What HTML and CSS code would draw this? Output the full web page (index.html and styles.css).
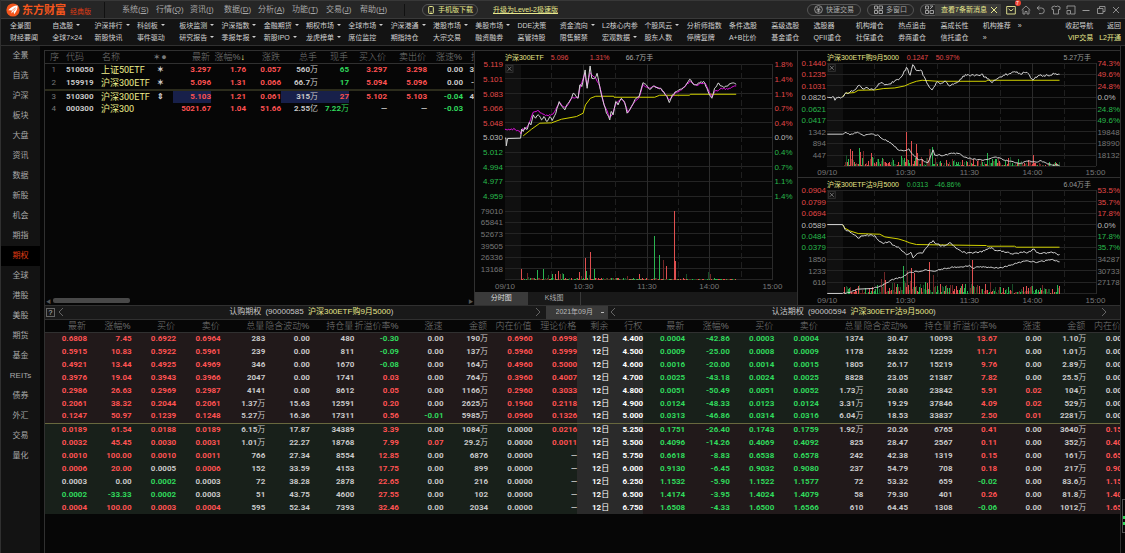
FILE: index.html
```html
<!DOCTYPE html>
<html lang="zh-CN">
<head>
<meta charset="utf-8">
<title>东方财富 经典版</title>
<link rel="stylesheet" href="styles.css">
</head>
<body>
<header class="topbar">
  <div class="brand">
    <svg class="brand-mark" viewBox="0 0 14 14"><circle cx="7" cy="7" r="6.6" fill="#f4551c"/><path d="M2.3 7.2Q6 2.6 11.6 2.5Q11.8 7 8.2 11.2L7.4 8.4L5.3 10.6L5.9 7.4Z" fill="#fff"/><path d="M5.9 7.6L9.4 4.6M7.3 8.7L9.9 5.4" stroke="#f4551c" stroke-width=".6"/></svg>
    <strong class="brand-name">东方财富</strong><span class="brand-edition">经典版</span>
  </div>
  <nav class="menu" id="menu"></nav>
  <button class="pill phone" type="button"><svg class="ico-s" viewBox="0 0 8 8"><rect x="1.7" y=".5" width="4.6" height="7" rx=".7" fill="none" stroke="currentColor"/><path d="M3.3 6h1.4" stroke="currentColor"/></svg>手机版下载</button>
  <a class="upgrade" href="#">升级为Level-2极速版</a>
  <div class="tools">
    <button class="pill" type="button"><svg class="ico-m" viewBox="0 0 9 9"><circle cx="4.5" cy="4.5" r="3.9" fill="none" stroke="currentColor" stroke-width=".8"/><path d="M2.7 2L4.5 4.2L6.3 2M2.6 4.5h3.8M2.6 6h3.8M4.5 4.2V7.5" fill="none" stroke="currentColor" stroke-width=".8"/></svg>快速交易</button>
    <button class="pill" type="button"><svg class="ico-m" viewBox="0 0 9 9"><path d="M.5 1h3v3h-3zM5 1h3.5v3H5zM.5 5.5h3v3h-3zM5 5.5h3.5v3H5z" fill="none" stroke="currentColor" stroke-width=".9"/></svg>多窗口</button>
    <div class="notice-wrap">
      <button class="pill stub" type="button" aria-label="布局"><svg class="ico-m" viewBox="0 0 9 9"><path d="M.5 1h3v3h-3zM5 4l3-3M.5 5.5h3v3h-3zM5 8.5V5.5h3.5v3zM5 1h3" fill="none" stroke="currentColor" stroke-width=".9"/></svg></button>
      <div class="notice"><a href="#">查看7条新消息</a><button type="button" aria-label="关闭消息"><svg class="ico-s" viewBox="0 0 8 8"><path d="M1 1l6 6M7 1l-6 6" stroke="currentColor" fill="none"/></svg></button></div>
    </div>
    <div class="sysicons">
      <button class="mail" type="button" aria-label="邮件"><svg class="ico" viewBox="0 0 10 10"><path d="M.7 1.500h8.600v7.500H.7zM2.500 3.800L5 6L7.500 3.800" fill="none" stroke="currentColor"/></svg><span class="badge">7</span></button>
      <button type="button" aria-label="首页"><svg class="ico" viewBox="0 0 10 10"><path d="M.7 5L5 1l4.300 4M2 4.500V9h2V6.500h2V9h2V4.500" fill="none" stroke="currentColor" stroke-width=".9"/></svg></button>
      <button type="button" aria-label="返回"><svg class="ico" viewBox="0 0 10 10"><path d="M3.500 1L1 3l2.500 2M1 3h4.500a2.800 2.800 0 010 5.600H3" fill="none" stroke="currentColor" stroke-width=".9"/></svg></button>
      <button type="button" aria-label="皮肤"><svg class="ico" viewBox="0 0 10 10"><path d="M1 2l2.500-1Q5 2.500 6.500 1L9 2v2.500H7.500V9h-5V4.500H1z" fill="none" stroke="currentColor" stroke-width=".9"/></svg></button>
      <button type="button" aria-label="小窗"><svg class="ico" viewBox="0 0 10 10"><path d="M1 4V1h8v8H5M1 5.500h3.500V9H1z" fill="none" stroke="currentColor" stroke-width=".9"/></svg></button>
      <button type="button" aria-label="最小化"><svg class="ico" viewBox="0 0 10 10"><path d="M1.500 5.500h7" stroke="currentColor"/></svg></button>
      <button type="button" aria-label="还原"><svg class="ico" viewBox="0 0 10 10"><path d="M1.500 3.500h5.500v5H1.500zM3.500 3.500v-2H9v5H7" fill="none" stroke="currentColor" stroke-width=".9"/></svg></button>
      <button type="button" aria-label="关闭"><svg class="ico" viewBox="0 0 10 10"><path d="M2 2l6 6M8 2l-6 6" stroke="currentColor" stroke-width=".9"/></svg></button>
    </div>
  </div>
</header>

<nav class="quicknav">
  <div class="quick-grid" id="quick"></div>
  <div class="quick-side">
    <a href="#">收起导航</a><a href="#">返回</a>
    <a class="gold" href="#">VIP交易</a><a class="gold" href="#">L2开通</a>
  </div>
</nav>

<div class="workspace">
  <nav class="sidebar" id="sidebar"></nav>
  <main class="main">
    <div class="upper">
      <section class="watch">
        <table class="quotes">
          <colgroup><col class="w-no"><col class="w-code"><col class="w-name"><col class="w-mark"><col class="w-38"><col class="w-35"><col class="w-35"><col class="w-37"><col class="w-31"><col class="w-38"><col class="w-40"><col class="w-36"><col></colgroup>
          <thead><tr><th>序</th><th class="l">代码</th><th class="l">名称</th><th class="mark">✶●</th><th>最新</th><th>涨幅%<span class="down">↓</span></th><th>涨跌</th><th>总手</th><th>现手</th><th>买入价</th><th>卖出价</th><th>涨速%</th><th class="cut">持</th></tr></thead>
          <tbody id="watch"></tbody>
        </table>
        <div class="scroll"><span class="arrow">◀</span><span class="thumb"></span><span class="arrow end">▶</span></div>
      </section>
      <section class="chart-main">
        <svg id="chart1" class="chart" viewBox="475 51 322 241"></svg>
        <div class="tabs"><button class="tab on" type="button">分时图</button><button class="tab" type="button">K线图</button></div>
      </section>
      <section class="chart-side">
        <svg id="chart2" class="chart" viewBox="798 51 323 126"></svg>
        <svg id="chart3" class="chart" viewBox="798 178 323 127"></svg>
      </section>
    </div>
    <section class="options">
      <div class="option-bar">
        <div class="bar-half"><button class="help" type="button">?</button><button class="step" type="button" aria-label="上一个"><svg class="ico-s" viewBox="0 0 8 8"><path d="M6 0L2 4l4 4" fill="none" stroke="currentColor" stroke-width=".8"/></svg></button><p class="bar-title call">认购期权 <span>(90000585</span> <b>沪深300ETF购9月5000</b>)</p><button class="step" type="button" aria-label="下一个"><svg class="ico-s" viewBox="0 0 8 8"><path d="M2 0l4 4l-4 4" fill="none" stroke="currentColor" stroke-width=".8"/></svg></button></div>
        <select class="month" aria-label="到期月份"><option>2021年09月</option></select>
        <div class="bar-half put-half"><button class="step" type="button" aria-label="上一个"><svg class="ico-s" viewBox="0 0 8 8"><path d="M6 0L2 4l4 4" fill="none" stroke="currentColor" stroke-width=".8"/></svg></button><p class="bar-title put">认沽期权 <span>(90000594</span> <b>沪深300ETF沽9月5000</b>)</p><button class="step" type="button" aria-label="下一个"><svg class="ico-s" viewBox="0 0 8 8"><path d="M2 0l4 4l-4 4" fill="none" stroke="currentColor" stroke-width=".8"/></svg></button></div>
      </div>
      <div class="option-scroll">
        <table class="optable">
          <colgroup id="opcols"></colgroup>
          <thead><tr id="ophead"></tr></thead>
          <tbody id="opbody"></tbody>
        </table>
      </div>
    </section>
  </main>
  <aside class="edge"><div class="meter"></div></aside>
</div>
<script src="app.js"></script>
</body>
</html>
```
FILE: styles.css
```css
* { box-sizing: border-box; }
body {
  margin: 0; height: 100vh; overflow: hidden;
  display: flex; flex-direction: column;
  background: #060606; color: #c8c8c8;
  border-left: 1px solid #303030;
  font: 8px/12px "Liberation Sans", "Noto Sans CJK SC", sans-serif;
}
a { color: inherit; text-decoration: none; }
button { font: inherit; color: inherit; background: none; border: 0; padding: 0; margin: 0; white-space: nowrap; }
svg { display: block; }
.ico-s { width: 8px; height: 8px; }
.ico-m { width: 9px; height: 9px; }
.ico { width: 10px; height: 10px; }

.topbar {
  flex: none; height: 19px; display: flex; align-items: center;
  background: #262626; border-top: 1px solid #383838; border-bottom: 1px solid #3a3a3a;
  white-space: nowrap;
}
.brand { width: 104px; padding-left: 5px; display: flex; align-items: center; gap: 2px; color: #f4551c; border-right: 1px solid #111; }
.brand-mark { width: 14px; height: 14px; }
.brand-name { font-size: 11px; line-height: 16px; }
.brand-edition { font-size: 7px; line-height: 8px; padding: 4px 0 0 2px; color: #e03c14; }
.menu { display: grid; grid-template-columns: repeat(8, 34px); padding: 0 10px 0 17px; color: #a8a8a8; border-right: 1px solid #111; }
.pill { display: flex; align-items: center; justify-content: center; gap: 3px; height: 12px; padding: 0 6px; border: 1px solid #555; border-radius: 6px; font-size: 7px; color: #aaa; }
.phone { margin: 0 15px 0 17px; padding: 0 4px; color: #e6e68c; }
.upgrade { font-size: 7px; color: #e6e68c; text-decoration: underline; }
.tools { margin-left: auto; display: flex; align-items: center; gap: 6px; padding-right: 2px; }
.notice-wrap { display: flex; align-items: center; margin-right: -4px; }
.stub { border-right: 0; border-radius: 6px 0 0 6px; padding: 0 1px 0 4px; }
.notice { display: flex; align-items: center; gap: 3px; height: 12px; padding: 0 3px 0 6px; background: #3c3c3a; color: #e6e68c; font-size: 7px; }
.sysicons { display: grid; grid-template-columns: repeat(8, 15px); justify-items: center; color: #999; }
.mail { position: relative; color: #d8d88c; }
.badge { position: absolute; left: 9px; top: -5px; width: 6px; height: 6px; border-radius: 3px; background: #f04030; color: #fff; font-size: 5px; line-height: 6px; text-align: center; }

.quicknav { flex: none; height: 27px; display: flex; justify-content: space-between; padding: 1px 4px 0 9px; background: #131313; border-bottom: 1px solid #303030; font-size: 7px; color: #d0d0d0; white-space: nowrap; }
.quick-grid { flex: 0 1 1015px; display: grid; grid-template-columns: repeat(24, minmax(0, 1fr)); grid-auto-rows: 12px; }
.has-menu::after { content: ""; display: inline-block; margin: 0 0 2px 3px; border: 2px solid transparent; border-top-color: #d0d0d0; border-bottom: 0; }
.quick-side { display: grid; grid-template-columns: auto auto; grid-auto-rows: 12px; column-gap: 6px; justify-items: end; }
.gold { color: #e6e68c; }

.workspace { flex: 1; min-height: 0; display: flex; }
.sidebar { flex: none; width: 39px; background: #131313; display: flex; flex-direction: column; color: #a8a8a8; }
.sidebar a { height: 20px; line-height: 20px; text-align: center; }
.sidebar .on { background: #000; color: #e03c14; }
.main { flex: 1; min-width: 0; margin: 4px 0 0 4px; border-left: 1px solid #303030; border-top: 1px solid #303030; display: flex; flex-direction: column; }
.edge { flex: none; width: 5px; border-left: 1px solid #303030; display: flex; flex-direction: column; justify-content: flex-end; padding-bottom: 20px; }
.meter { height: 34px; margin-left: 1px; border: 1px solid #505050; border-right: 0; background: linear-gradient(transparent 16px, #2fd95a 16px, #2fd95a 19px, transparent 19px, transparent 22px, #2fd95a 22px, #2fd95a 25px, transparent 25px); }

.upper { flex: none; display: grid; grid-template-columns: 430fr 323fr 324fr; }
.upper > section + section { border-left: 1px solid #303030; }
.watch { display: flex; flex-direction: column; overflow: hidden; }
table { border-collapse: collapse; table-layout: fixed; }
th { font: 300 9px/12px "Liberation Sans", "Noto Sans CJK SC", sans-serif; color: #787878; text-align: right; padding: 0 1px 0 0; white-space: nowrap; }
td { height: 13px; font: 700 8px/12px Roboto, "Noto Sans CJK SC", sans-serif; padding: 0; text-align: right; white-space: nowrap; }
thead tr { border-bottom: 1px solid #303030; }
.man { font-weight: 400; }
.quotes { width: 100%; }
.quotes th { overflow: hidden; }
.w-no { width: 15px; }
.w-code { width: 36px; }
.w-name { width: 52px; }
.w-mark { width: 25px; }
.w-31 { width: 31px; }
.w-35 { width: 35px; }
.w-36 { width: 36px; }
.w-37 { width: 37px; }
.w-38 { width: 38px; }
.w-40 { width: 40px; }
.quotes .l { text-align: left; padding-left: 6px; }
.quotes .name { font-size: 9px; font-weight: 400; color: #f0f08c; padding-left: 5px; }
.quotes .no { font-weight: 400; color: #777; padding-right: 4px; }
.quotes .mark { text-align: center; }
.quotes th.cut { padding-left: 8px; text-align: left; }
.quotes .sel { background: #18204a; }
.quotes .ruled { border-top: 2px solid #2c2c1c; }
.down { color: #f0f08c; font-weight: 700; }
.up-c { color: #ff5252; }
.dn-c { color: #30d95c; }
.scroll { margin-top: auto; display: flex; align-items: center; gap: 2px; height: 6px; margin-bottom: 1px; padding: 0 1px; color: #555; font-size: 5px; line-height: 6px; }
.thumb { width: 18%; height: 5px; background: #484848; border-radius: 2px; }
.end { margin-left: auto; }

.chart { width: 100%; height: auto; font-size: 8px; }
.chart-main { display: flex; flex-direction: column; }
.chart-side #chart3 { border-top: 1px solid #303030; }
.tabs { display: flex; height: 13px; margin-top: auto; background: #191919; color: #aaa; }
.tab { width: 53px; border-right: 1px solid #3a3a3a; font-size: 7px; }
.tab.on { background: #3a3a3a; color: #ddd; }

.options { flex: 1; min-height: 0; display: flex; flex-direction: column; border-top: 1px solid #303030; }
.option-bar { flex: none; height: 14px; display: grid; grid-template-columns: 501fr 63fr 512fr; align-items: center; background: #191919; border-bottom: 1px solid #303030; }
.bar-half { display: flex; align-items: center; gap: 2px; padding: 0 4px 0 1px; }
.put-half { padding-right: 12px; }
.bar-title { margin: 0 auto; white-space: pre; }
.call { padding-left: 24px; }
.put { padding-right: 10px; }
.bar-title span { padding: 0 2px; }
.bar-title b { font-weight: 400; color: #e6e68c; }
.help { width: 9px; height: 9px; border: 1px solid #666; font-size: 7px; line-height: 7px; }
.step { color: #777; }
.month { appearance: none; width: 100%; height: 13px; border: 0; border-radius: 0; padding: 0 0 0 10px; font: inherit; font-size: 7px; color: #bbb; background: #3a3a3a linear-gradient(#bbb, #bbb) calc(100% - 4px) 6px / 3px 1px no-repeat; }
.option-scroll { flex: 1; min-height: 0; overflow: hidden; }
.optable { width: calc(100% + 11px); }
.c-edge { width: 42px; }
.c-days { width: 32px; }
.c-strike { width: 34px; }
.red { background: #21191a; }
.green { background: #18201a; }
.mid { background: #2a2a2a; color: #fff; }
.atm { border-top: 1px solid #68683e; }
```
FILE: app.js
```js
const byId = id => document.getElementById(id);

/* "+" marks a rising value, "~" a falling one */
function cell(value, cls = '') {
  const tone = value[0] === '+' ? ' up-c' : value[0] === '~' ? ' dn-c' : '';
  const text = value.replace(/^[+~]/, '').replace(/[万亿日]/, '<span class="man">$&</span>');
  return `<td class="${cls}${tone}">${text}</td>`;
}

byId('menu').innerHTML = '系统(S) 行情(Q) 资讯(I) 数据(D) 分析(A) 功能(T) 交易(J) 帮助(H)'.split(' ')
  .map(t => `<a href="#">${t.replace(/\((.)\)/, '(<u>$1</u>)')}</a>`).join('');

const quick = ('全景图 自选股* 沪深排行* 科创板* 板块监测* 沪深指数* 金融期货* 期权市场* 全球市场* 沪深港通* 港股市场* 美股市场* DDE决策 资金流向* L2核心内参 个股风云* 分析师指数 条件选股 高级选股 选股器 机构增仓 热点追击 高成长性 机构推荐&emsp;» ' +
  '财经要闻 全球7×24 新股快讯 事件驱动 研究报告* 季报年报* 新股IPO* 龙虎榜单* 席位监控 期指持仓 大宗交易 融资融券 高管持股 限售解禁 宏观数据* 股东人数 停牌复牌 A+B比价 基金重仓 QFII重仓 社保重仓 券商重仓 信托重仓 »').split(' ');
byId('quick').innerHTML = quick.map(t => `<a href="#"${t.endsWith('*') ? ' class="has-menu"' : ''}>${t.replace('*', '')}</a>`).join('');

byId('sidebar').innerHTML = '全景 自选 沪深 板块 大盘 资讯 数据 新股 机会 期指 期权 全球 港股 美股 期货 基金 REITs 债券 外汇 交易 量化'.split(' ')
  .map(t => `<a href="#"${t === '期权' ? ' class="on"' : ''}>${t}</a>`).join('');

const watch = [
  '1 510050 上证50ETF ✶ +3.297 +1.76 +0.057 560万 ~65 +3.297 +3.298 0.00 3',
  '2 159919 沪深300ETF ✶ +5.096 +1.31 +0.066 66.7万 ~17 +5.094 +5.096 0.00 -',
  '3 510300 沪深300ETF ⇕ +5.103 +1.21 +0.061 315万 +27 +5.102 +5.103 ~-0.04 4',
  '4 000300 沪深300 _ +5021.67 +1.04 +51.66 2.55亿 ~7.22万 — — ~-0.03 _'
];
byId('watch').innerHTML = watch.map((line, r) => `<tr${r === 2 ? ' class="ruled"' : ''}>` + line.split(' ').map((v, i) => {
  const cls = { 0: 'no', 1: 'l', 2: 'l name', 3: 'mark' }[i] || (r === 2 && [4, 7, 8].includes(i) ? 'sel' : '');
  return cell(v === '_' ? '' : v, cls);
}).join('') + '</tr>').join('');

const side = ['最新', '涨幅%', '买价', '卖价', '总量', '隐含波动%', '持仓量', '折溢价率%', '涨速', '金额', '内在价值'];
const heads = [...side, '理论价格', '剩余', '行权', ...side];
byId('opcols').innerHTML = heads.map((h, i) => `<col${i === 0 || i === 14 ? ' class="c-edge"' : i === 12 ? ' class="c-days"' : i === 13 ? ' class="c-strike"' : ''}>`).join('');
byId('ophead').innerHTML = heads.map(h => `<th>${h}</th>`).join('');

const options = [
  '+0.6808 +7.45 +0.6922 +0.6964 283 0.00 480 ~-0.30 0.00 190万 +0.6960 +0.6998 12日 4.400 ~0.0004 ~-42.86 ~0.0003 ~0.0004 1374 30.47 10093 +13.67 0.00 1.10万 0.0000',
  '+0.5915 +10.83 +0.5922 +0.5961 239 0.00 811 ~-0.09 0.00 137万 +0.5960 +0.5999 12日 4.500 ~0.0009 ~-25.00 ~0.0008 ~0.0009 1178 28.52 12259 +11.71 0.00 1.01万 0.0000',
  '+0.4921 +13.44 +0.4925 +0.4969 346 0.00 1670 ~-0.08 0.00 164万 +0.4960 +0.5000 12日 4.600 ~0.0016 ~-20.00 ~0.0014 ~0.0015 1805 26.17 15219 +9.76 0.00 2.89万 0.0000',
  '+0.3976 +19.04 +0.3943 +0.3966 2047 0.00 1741 +0.03 0.00 764万 +0.3960 +0.4007 12日 4.700 ~0.0025 ~-43.18 ~0.0024 ~0.0025 8828 23.05 21387 +7.82 0.00 25.5万 0.0000',
  '+0.2986 +26.63 +0.2969 +0.2987 4141 0.00 8612 +0.05 0.00 1166万 +0.2960 +0.3033 12日 4.800 ~0.0051 ~-50.49 ~0.0051 ~0.0052 1.73万 20.80 23842 +5.91 +0.02 104万 0.0000',
  '+0.2061 +38.32 +0.2044 +0.2061 1.37万 15.63 12591 +0.20 0.00 2625万 +0.1960 +0.2118 12日 4.900 ~0.0124 ~-48.33 ~0.0123 ~0.0124 3.31万 19.29 37846 +4.09 +0.02 529万 0.0000',
  '+0.1247 +50.97 +0.1239 +0.1248 5.27万 16.36 17311 +0.56 ~-0.01 5985万 +0.0960 +0.1326 12日 5.000 ~0.0313 ~-46.86 ~0.0314 ~0.0316 6.04万 18.53 33837 +2.50 +0.01 2281万 0.0000',
  '+0.0189 +61.54 +0.0188 +0.0189 6.15万 17.87 34389 +3.39 0.00 1084万 0.0000 +0.0216 12日 5.250 ~0.1751 ~-26.40 ~0.1743 ~0.1759 1.92万 20.26 6765 +0.41 0.00 3640万 +0.1540',
  '+0.0032 +45.45 +0.0030 +0.0031 1.01万 22.27 18768 +7.99 +0.07 29.2万 0.0000 +0.0011 12日 5.500 ~0.4096 ~-14.26 ~0.4069 ~0.4092 825 28.47 2567 +0.11 0.00 352万 +0.4040',
  '+0.0010 +100.00 +0.0010 +0.0011 766 27.34 8554 +12.85 0.00 6876 0.0000 — 12日 5.750 ~0.6618 ~-8.83 ~0.6538 ~0.6578 242 42.38 1319 +0.15 0.00 161万 +0.6540',
  '+0.0006 +20.00 0.0005 +0.0006 152 33.59 4153 +17.75 0.00 899 0.0000 — 12日 6.000 ~0.9130 ~-6.45 ~0.9032 ~0.9080 237 54.79 708 +0.18 0.00 217万 +0.9040',
  '0.0003 0.00 ~0.0002 0.0003 72 38.28 2878 +22.65 0.00 216 0.0000 — 12日 6.250 ~1.1532 ~-5.90 ~1.1522 ~1.1577 72 53.32 659 ~-0.02 0.00 83.6万 +1.1540',
  '~0.0002 ~-33.33 ~0.0002 0.0003 51 43.75 4600 +27.55 0.00 102 0.0000 — 12日 6.500 ~1.4174 ~-3.95 ~1.4024 ~1.4079 58 79.30 401 +0.26 0.00 81.8万 +1.4040',
  '+0.0004 +100.00 +0.0003 +0.0004 595 52.34 7393 +32.46 0.00 2034 0.0000 — 12日 6.750 ~1.6508 ~-4.33 ~1.6500 ~1.6566 610 64.45 1308 ~-0.06 0.00 1012万 +1.6540'
];
byId('opbody').innerHTML = options.map((line, r) => `<tr${r === 7 ? ' class="atm"' : ''}>` + line.split(' ').map((v, i) => {
  const inCall = i < 12, upper = r < 7;
  const cls = i === 12 || i === 13 ? 'mid' : inCall === upper ? 'red' : 'green';
  return cell(v, cls);
}).join('') + '</tr>').join('');

/* Charts: series are written in units of a third of a pixel */
let seed = 7;
const rnd = () => (seed = (seed * 16807) % 2147483647) / 2147483647;
function path(points, noise, color) {
  const p = points.trim().split(/\s+/).map(s => s.split(',').map(Number));
  let d = `M${p[0]}`;
  for (let i = 1; i < p.length; i++) {
    const [x0, y0] = p[i - 1], [x1, y1] = p[i];
    const flat = Math.abs(y1 - y0) < 3 && x1 - x0 > 35;
    const n = noise && !flat ? Math.max(1, Math.round((x1 - x0) / 4)) : 1;
    for (let k = 1; k < n; k++) d += `L${x0 + (x1 - x0) * k / n},${y0 + (y1 - y0) * k / n + (rnd() - .5) * noise}`;
    d += `L${x1},${y1}`;
  }
  return `<path d="${d}" fill="none" stroke="${color}" stroke-width="3"/>`;
}
function text(x, y, s, fill, anchor = 'start', size = 8) {
  return `<text x="${x}" y="${y}" fill="${fill}" text-anchor="${anchor}" font-size="${size}">${s}</text>`;
}
function chart(id, c) {
  const [ox, oy] = c.origin, X = x => ox + x / 3, Y = y => oy + y / 3;
  const top = c.rows[0], base = c.rows[c.rows.length - 1];
  let g = `<rect x="${c.x0}" y="${top}" width="47" height="${base - top}" fill="#101010"/>`;
  c.rows.forEach(y => g += `<path d="M${c.x0},${y}H${c.x1}" stroke="#242424" stroke-width="3"/>`);
  c.solid.forEach(x => g += `<path d="M${x},${top}V${base}" stroke="#2b2b2b" stroke-width="3"/>`);
  c.dash.forEach(x => g += `<path d="M${x},${top}V${base}" stroke="#1f1f1f" stroke-width="3" stroke-dasharray="18 9"/>`);
  c.bars.forEach(([x, y, col]) => g += `<path d="M${x},${base}V${y}" stroke="${col}" stroke-width="3"/>`);
  let t = '';
  c.left.forEach((s, i) => t += text(c.tx - 2, Y(c.rows[i]) + 3, s, tone(c, i), 'end'));
  c.right.forEach((s, i) => t += text(c.rx, Y(c.rows[i]) + 3, s, tone(c, i)));
  ['09/10', '10:30', '11:30', '14:00', '15:00'].forEach((s, i) => t += text(X(c.times[i]), Y(base) + 9, s, '#777', 'middle'));
  c.title.forEach(([x, s, f]) => t += text(x, c.ty, s, f, 'start', 7));
  const bx = X(c.x0) + 1, by = Y(top) + 1;
  t += `<rect x="${bx}" y="${by}" width="7" height="7" fill="#101010" stroke="#333" stroke-width="1"/><path d="M${bx + 1.5},${by + 1.5}l4,4m0,-4l-4,4" stroke="#999" stroke-width=".7"/>`;
  byId(id).innerHTML = `<g transform="translate(${ox} ${oy}) scale(.333333)"><g shape-rendering="crispEdges">${g}</g>${c.lines.map(l => path(...l)).join('')}</g>${t}`;
}
const tone = (c, i) => i < c.zero ? '#e04848' : i === c.zero ? '#bbb' : i < c.prices ? '#28b84c' : '#777';
const R = '#e05050', D = '#702626', G = '#2ab450', E = '#174f27';

function volumes(x0, x1, base, envelope, extra) {
  const out = [];
  for (let x = x0; x < x1; x += 3) {
    const roll = rnd();
    out.push([x, base - envelope(x) * (.1 + .9 * rnd() ** 2), roll < .25 ? R : roll < .52 ? D : roll < .76 ? G : E]);
  }
  return out.concat(extra);
}

chart('chart1', {
  origin: [470, 50], x0: 105, x1: 910, tx: 505, rx: 775, ty: 60, zero: 5, prices: 10,
  rows: [43, 87, 131, 175, 219, 263, 307, 351, 395, 439, 485, 518, 553, 589, 623, 658, 690],
  solid: [341, 532, 721, 910], dash: [245, 436, 627, 817], times: [105, 341, 532, 719, 909],
  left: '5.119 5.101 5.083 5.066 5.048 5.030 5.012 4.994 4.977 4.959 79010 65841 52673 39505 26336 13168'.split(' '),
  right: '1.8% 1.4% 1.1% 0.7% 0.4% 0.0% 0.4% 0.7% 1.1% 1.4%'.split(' '),
  title: [[505, '沪深300ETF', '#e6e68c'], [551, '5.096', '#e04848'], [590, '1.31%', '#e04848'], [626, '66.7万手', '#aaa']],
  bars: volumes(155, 480, 690, x => rnd() < .2 ? 20 : 6, [
    [154, 658, R], [173, 671, D], [203, 662, G], [221, 657, G], [256, 673, R], [265, 665, R], [281, 672, G],
    [329, 667, R], [346, 624, R], [350, 663, G], [361, 607, R], [374, 659, G], [508, 672, R], [556, 558, G], [571, 616, G],
    [583, 632, D], [592, 650, R], [616, 485, R], [619, 633, R], [652, 673, E], [718, 666, E], [722, 672, D]
  ]).concat(volumes(480, 800, 690, () => 4, [])),
  lines: [
    ['160,258 185,238 210,220 245,219 275,208 320,200 340,190 347,165 362,145 378,139 432,139 433,142 555,142 570,136 660,136 662,133 800,133', 0, '#d2d200'],
    ['105,238 135,238 140,243 150,245 153,252 158,236 165,238 178,220 190,187 203,182 215,190 235,198 250,192 262,170 268,158 280,170 292,168 305,145 325,142 332,108 345,70 352,108 361,68 378,85 390,110 403,165 420,203 430,188 440,158 455,148 465,160 475,188 495,155 508,142 520,104 540,115 552,110 575,118 599,150 620,127 645,112 660,94 682,106 705,98 727,141 735,125 755,115 775,118 795,108 800,108', 5, '#e010e0'],
    ['105,265 108,265 109,288 113,266 152,265 155,238 160,245 165,232 172,238 178,218 183,225 190,195 197,205 205,195 215,210 222,200 232,215 240,200 247,212 258,190 268,155 277,170 285,180 295,160 305,145 310,130 318,138 325,145 330,105 336,110 346,60 352,115 361,48 366,85 375,85 382,70 388,100 395,135 403,165 410,190 420,210 424,185 430,195 438,155 445,165 455,145 465,158 472,190 485,170 495,150 508,140 520,98 530,105 540,118 552,108 562,112 572,115 582,125 592,140 599,158 608,135 620,125 632,118 645,110 652,100 660,88 670,102 682,105 695,95 705,98 712,115 720,135 727,145 735,115 745,100 755,108 765,112 775,108 785,100 795,100 800,103', 6, '#d8d8d8']
  ]
});

const sideAxis = {
  x0: 97, x1: 905, tx: 828, rx: 1098, zero: 3, prices: 6,
  solid: [334, 524, 715, 905], dash: [239, 429, 619, 809], times: [97, 332, 524, 714, 903]
};
chart('chart2', {
  ...sideAxis, origin: [795, 50], ty: 60,
  rows: [40, 73, 108, 142, 177, 211, 245, 281, 316, 350],
  left: '0.1440 0.1235 0.1031 0.0826 0.0621 0.0417 1342 894 447'.split(' '),
  right: '74.3% 49.6% 24.8% 0.0% 24.8% 49.6% 19848 18990 18132'.split(' '),
  title: [[827, '沪深300ETF购9月5000', '#e6e68c'], [907, '0.1247', '#e04848'], [936, '50.97%', '#e04848'], [1064, '5.27万手', '#999']],
  bars: volumes(150, 796, 350, x => x < 250 ? 48 : x < 330 ? 34 : x < 430 ? 56 : x < 580 ? 24 : x < 720 ? 30 : 14, [
    [166, 298, R], [193, 296, G], [206, 305, D], [334, 246, R], [349, 273, R], [364, 283, R], [412, 293, G], [578, 309, G], [718, 317, R]
  ]),
  lines: [
    ['143,140 152,130 178,128 190,121 240,120 265,116 300,114 330,108 345,101 365,94 382,91 430,94 575,94 577,91 795,91', 0, '#d2d200'],
    ['97,142 117,142 120,151 125,143 143,141 150,131 165,127 178,121 190,107 205,117 220,115 235,120 248,108 258,98 270,105 285,102 300,92 315,85 325,72 335,52 346,76 354,44 365,62 378,60 388,80 400,105 412,120 425,97 440,100 452,94 465,108 480,100 492,95 505,78 520,73 540,78 560,73 578,87 593,98 610,85 630,76 653,66 675,70 697,67 715,90 735,76 760,77 780,72 795,73', 7, '#d8d8d8'],
    ['97,253 143,253 150,248 165,255 187,247 205,257 225,253 248,255 262,267 280,274 295,285 310,300 325,303 342,297 355,315 370,330 385,332 400,338 415,300 420,316 450,316 470,310 490,311 510,322 530,327 565,332 590,325 605,322 625,330 660,338 680,340 700,334 725,337 740,333 760,343 795,348', 4, '#d0d0d0']
  ]
});
chart('chart3', {
  ...sideAxis, origin: [795, 175], ty: 187,
  rows: [46, 80, 115, 149, 184, 217, 253, 288, 323, 357],
  left: '0.0904 0.0799 0.0694 0.0589 0.0484 0.0379 1850 1233 616'.split(' '),
  right: '53.5% 35.7% 17.8% 0.0% 17.8% 35.7% 34287 30733 27178'.split(' '),
  title: [[827, '沪深300ETF沽9月5000', '#e6e68c'], [907, '0.0313', '#28b84c'], [935, '-46.86%', '#28b84c'], [1064, '6.04万手', '#999']],
  bars: volumes(150, 796, 357, x => x < 260 ? 26 : x < 420 ? 46 : x < 600 ? 30 : 26, [
    [270, 291, D], [325, 273, G], [337, 289, D], [349, 280, R], [360, 294, R], [404, 261, R], [415, 300, D], [532, 254, R], [589, 321, D], [655, 327, E], [790, 332, G]
  ]),
  lines: [
    ['143,149 150,160 165,168 190,176 255,178 270,186 310,192 330,198 345,204 365,209 430,210 575,212 577,214 660,214 665,217 795,217', 0, '#d2d200'],
    ['97,149 143,149 150,163 165,172 178,180 190,190 205,183 225,180 240,182 255,200 265,206 280,201 300,212 318,224 335,240 348,232 355,249 368,236 382,235 392,222 403,206 415,197 425,207 440,213 455,210 468,204 480,215 497,227 515,236 530,233 550,234 570,228 592,218 605,227 630,232 655,238 680,232 700,233 716,223 730,233 755,236 780,233 795,239', 6, '#d8d8d8'],
    ['97,356 143,356 150,355 170,351 190,343 235,341 260,334 285,318 300,312 325,306 345,292 375,290 395,285 415,289 440,283 480,276 505,277 525,271 535,281 550,276 585,278 620,278 650,270 690,259 730,262 770,254 795,261', 4, '#d0d0d0']
  ]
});
```
